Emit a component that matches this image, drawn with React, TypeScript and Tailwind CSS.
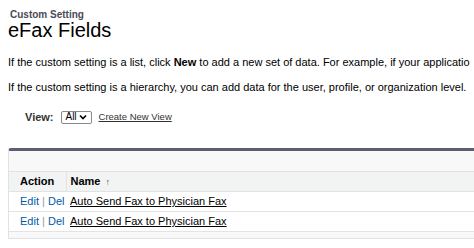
export default function App() {
  const rows = ['Auto Send Fax to Physician Fax', 'Auto Send Fax to Physician Fax']

  return (
    <main className="h-[248px] w-[474px] overflow-hidden bg-white font-['Liberation_Sans',Arial,sans-serif] text-[#000]">
      <div className="pl-[8px] pt-[9px]">
        <div className="pl-[2px] text-[10px] font-bold leading-[11px] text-[#4a4a56]">
          Custom Setting
        </div>
        <h1 className="text-[20px] leading-[20px] text-black">eFax Fields</h1>
      </div>

      <p className="mt-[15px] whitespace-nowrap pl-[8px] text-[11px] leading-[14px]">
        If the custom setting is a list, click <b>New</b> to add a new set of data. For example, if your applicatio
      </p>
      <p className="mt-[11px] whitespace-nowrap pl-[8px] text-[11px] leading-[14px]">
        If the custom setting is a hierarchy, you can add data for the user, profile, or organization level.
      </p>

      <div className="mt-[16px] flex h-[14px] items-center pl-[25px]">
        <span className="text-[11px] font-bold text-[#333]">View:</span>
        <span className="ml-[7px] flex h-[13px] w-[31px] items-center justify-center gap-[2px] rounded-[2px] border border-[#8a8a8a] text-[10px] leading-none">
          All
          <svg width="8" height="6" viewBox="0 0 8 6">
            <path d="M1 1.5 L4 4.5 L7 1.5" fill="none" stroke="#000" strokeWidth="1.6" />
          </svg>
        </span>
        <a className="ml-[7px] text-[9.5px] text-[#333] underline">Create New View</a>
      </div>

      <section className="ml-[8px] mt-[24px] rounded-tl-[3px] border-t-[3px] border-l border-b border-[#e0e3e5] border-t-[#5a5f75] bg-[#f8f8f8]">
        <div className="h-[20px]" />
        <table className="w-full border-collapse text-[11px]">
          <thead>
            <tr className="h-[20px] border-y border-[#e0e3e5] bg-[#f2f3f3]">
              <th className="w-[57px] border-r border-[#e0e3e5] pl-[11px] text-left font-bold">Action</th>
              <th className="pl-[4px] text-left font-bold">
                Name <span className="ml-[2px] text-[9px] font-normal text-[#555]">↑</span>
              </th>
            </tr>
          </thead>
          <tbody className="bg-white">
            {rows.map((name, i) => (
              <tr key={i} className="h-[20px] border-b border-[#e3e3e3]">
                <td className="pl-[11px] text-[#015ba7]">
                  Edit <span className="text-[#999]">|</span> Del
                </td>
                <td className="pl-[4px]">
                  <a className="underline">{name}</a>
                </td>
              </tr>
            ))}
          </tbody>
        </table>
        <div className="h-[6px]" />
      </section>
    </main>
  )
}
